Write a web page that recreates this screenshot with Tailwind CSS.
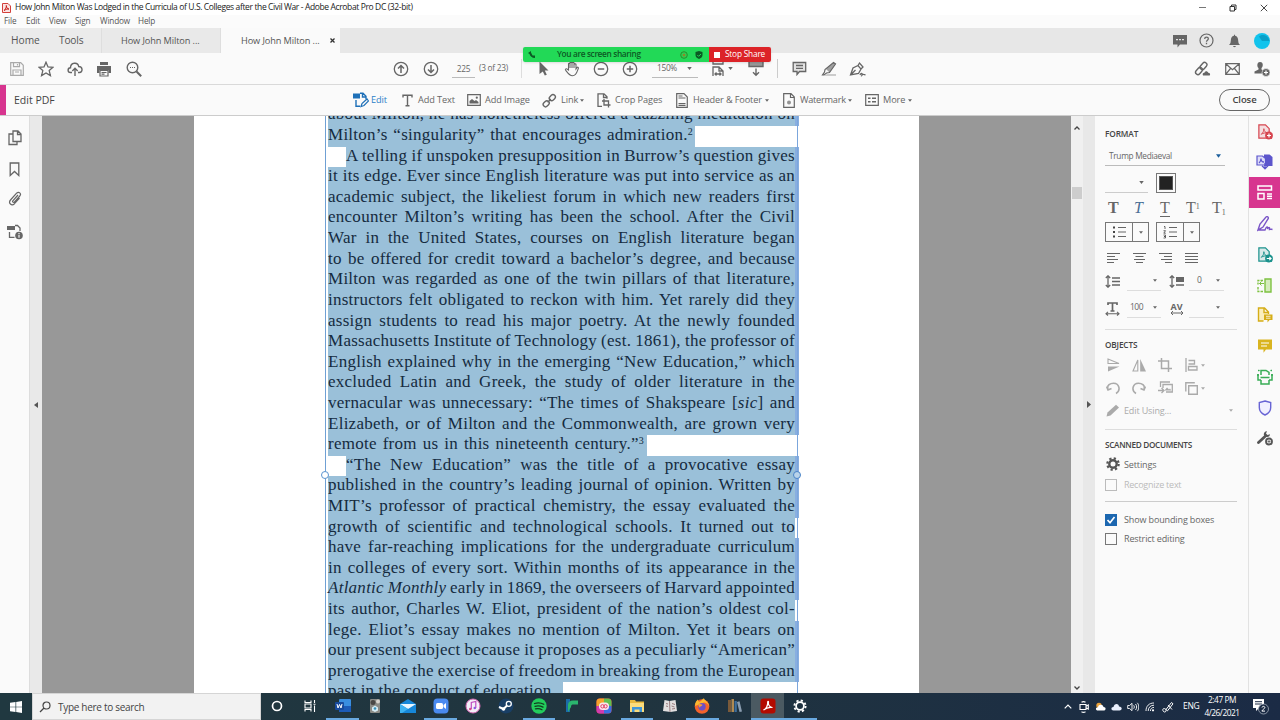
<!DOCTYPE html>
<html lang="en">
<head>
    <meta charset="UTF-8">
    <title>How John Milton Was Lodged in the Curricula of U.S. Colleges after the Civil War - Adobe Acrobat Pro DC (32-bit)</title>
    <script src="https://cdn.jsdelivr.net/npm/@tailwindcss/browser@4"></script>
</head>
<body class="w-[1280px] h-[720px] overflow-hidden bg-[#fafafa] font-['Open_Sans',sans-serif] text-[9px] leading-none text-[#555] whitespace-nowrap">

<!-- Shared symbols -->
<svg class="hidden">
    <symbol id="caret" viewBox="0 0 6 4"><path d="M0 0h6L3 4z" fill="currentColor"/></symbol>
    <symbol id="pdf" viewBox="0 0 16 16"><path d="M2 1h7l4 4v10H2z" fill="currentColor" fill-opacity=".15" stroke="currentColor" stroke-width="1.3"/><path d="M4.500 11c2-1.500 3-4 2.800-6 .3 3 1.500 4 3.700 4.300-2.500 0-4.500.5-6.500 1.700z" fill="none" stroke="currentColor"/></symbol>
    <symbol id="link" viewBox="0 0 16 16"><g fill="none" stroke="currentColor" stroke-width="1.5"><rect x="-3.500" y="-2.500" width="7" height="5" rx="2.500" transform="translate(4.500 11.500) rotate(-45)"/><rect x="-3.500" y="-2.500" width="7" height="5" rx="2.500" transform="translate(11 5) rotate(-45)"/><path d="M6 10l3.500-3.500"/></g></symbol>
</svg>

<div class="flex flex-col h-full">

    <!-- Title bar -->
    <div class="flex items-center h-[15px] bg-white text-[#222]">
        <svg class="w-[9px] h-[10px] ml-[2px]" viewBox="0 0 9 10"><path d="M.5.5h5.500l2.500 2.500v6.500h-8z" fill="#fbe3e2" stroke="#d2403c"/><path d="M2 7.500C4 6 4.500 4 4.300 2.500 4.500 5 5.500 6 7 6 5 6 3.500 6.500 2 7.500z" fill="none" stroke="#c9201c"/></svg>
        <span class="ml-[4px] text-[8.500px] tracking-[-0.380px]">How John Milton Was Lodged in the Curricula of U.S. Colleges after the Civil War - Adobe Acrobat Pro DC (32-bit)</span>
        <div class="flex items-center ml-auto pr-[12px] gap-[23px]">
            <svg class="w-[7px] h-[8px]" viewBox="0 0 7 8"><path d="M0 3.500h7" stroke="#777"/></svg>
            <svg class="w-[8px] h-[8px]" viewBox="0 0 8 8"><path d="M1 2.500h4.500v4.500H1zM2.500 2V1H7v4.500H6" fill="none" stroke="#333"/></svg>
            <svg class="w-[8px] h-[8px]" viewBox="0 0 8 8"><path d="M.8.8l6.400 6.400M7.200.8L.8 7.200" stroke="#333" stroke-width=".9"/></svg>
        </div>
    </div>

    <!-- Menu bar -->
    <div class="flex items-center h-[13px] pl-[4px] text-[8.200px] tracking-[-0.150px] bg-[#fbfbfb]">
        <span class="w-[22px]">File</span>
        <span class="w-[23px]">Edit</span>
        <span class="w-[26px]">View</span>
        <span class="w-[25px]">Sign</span>
        <span class="w-[38px]">Window</span>
        <span>Help</span>
    </div>

    <!-- Document tabs -->
    <div class="flex h-[25px] bg-[#e7e7e7] items-stretch">
        <div class="flex items-center w-[101px] text-[10.200px] pl-[11px] bg-[#ebebeb]"><span class="w-[48px]">Home</span><span class="tracking-[-0.200px]">Tools</span></div>
        <div class="flex items-center w-[120px] pl-[19px] text-[9.200px] tracking-[-0.100px] border-x border-[#dedede] bg-[#e9e9e9]">How John Milton ...</div>
        <div class="flex items-center w-[119px] pl-[20px] text-[9.200px] tracking-[-0.100px] bg-[#fafafa]"><span class="w-[89px]">How John Milton ...</span>
            <svg class="w-[5px] h-[5px]" viewBox="0 0 5 5"><path d="M.5.5l4 4M4.500.5l-4 4" stroke="#333" stroke-width="1.300"/></svg>
        </div>
        <div class="flex items-center ml-auto pr-[10px] text-[#666]">
            <svg class="w-[14px] h-[14px]" viewBox="0 0 14 14"><path d="M0 1h14v9.500H7l-2.500 3v-3H0z" fill="currentColor"/><path d="M3.200 5.700h1.600M6.200 5.700h1.600M9.200 5.700h1.600" stroke="#fff" stroke-width="1.300"/></svg>
            <svg class="w-[15px] h-[15px] ml-[12px]" viewBox="0 0 15 15"><circle cx="7.500" cy="7.500" r="6.500" fill="none" stroke="currentColor" stroke-width="1.200"/><path d="M5.700 6c0-2.500 3.700-2.300 3.600-.2 0 1.400-1.800 1.400-1.800 2.900M7.500 9.800v1.500" fill="none" stroke="currentColor" stroke-width="1.300"/></svg>
            <svg class="w-[13px] h-[14px] ml-[14px]" viewBox="0 0 13 14"><path d="M1 11c2-1.500 1.500-3 2-6 .3-2 1.500-3 3-3.200V.8h1v1c1.500.2 2.700 1.200 3 3.200.5 3 0 4.500 2 6zM5 12h3c-.3 1.500-2.700 1.500-3 0z" fill="currentColor"/></svg>
            <svg class="w-[16px] h-[16px] ml-[13px]" viewBox="0 0 16 16"><circle cx="8" cy="8" r="8" fill="#12c3ec"/><path d="M8 8L5 3.500C7 1 14 1 15.500 8z" fill="#0aa0c8"/></svg>
        </div>
    </div>

    <!-- Main toolbar -->
    <div class="flex items-center h-[32px] border-b border-[#d9d9d9] text-[#666] relative">
        <svg class="w-[14px] h-[14px] ml-[10px] text-[#aaa]" viewBox="0 0 14 14"><path d="M.7.7h10l2.600 2.600v10H.7zM3.500.7v4h6v-4M3 13.300V8h8v5.300M5 10h4M7.500 2v1.500" fill="none" stroke="currentColor" stroke-width="1.200"/></svg>
        <svg class="w-[16px] h-[16px] ml-[14px]" viewBox="0 0 16 16"><path d="M8 1.200l2 4.700 5 .4-3.800 3.300 1.200 5L8 11.900l-4.400 2.700 1.200-5L1 6.300l5-.4z" fill="none" stroke="currentColor" stroke-width="1.300"/></svg>
        <svg class="w-[16px] h-[16px] ml-[13px]" viewBox="0 0 16 16"><path d="M5 11.500H3.500C.3 11.300.3 7 3.500 6.800 3.500 1 11 .8 11.700 5.500 16 5.500 16 11.300 12.500 11.500H11M8 15V7.500M5.300 10L8 7.300l2.700 2.700" fill="none" stroke="currentColor" stroke-width="1.400"/></svg>
        <svg class="w-[16px] h-[16px] ml-[13px]" viewBox="0 0 16 16"><path d="M4 1h8v3H4zM1 5h14v7h-2.500V9h-9v3H1z" fill="currentColor"/><path d="M4 9.500h8V15H4zM5.500 11.500h5M5.500 13.200h3" fill="none" stroke="currentColor" stroke-width="1.200"/></svg>
        <svg class="w-[16px] h-[16px] ml-[14px]" viewBox="0 0 16 16"><circle cx="6.500" cy="6.500" r="5.300" fill="none" stroke="currentColor" stroke-width="1.400"/><path d="M10.500 10.500l4.700 4.700" stroke="currentColor" stroke-width="2"/><path d="M4 6.500h1M6 6.500h1M8 6.500h1" stroke="currentColor" stroke-width="1.200"/></svg>

        <svg class="w-[16px] h-[16px] ml-[251px]" viewBox="0 0 16 16"><circle cx="8" cy="8" r="6.700" fill="none" stroke="currentColor" stroke-width="1.300"/><path d="M8 12V4.500M5 7.500l3-3 3 3" fill="none" stroke="currentColor" stroke-width="1.500"/></svg>
        <svg class="w-[16px] h-[16px] ml-[14px]" viewBox="0 0 16 16"><circle cx="8" cy="8" r="6.700" fill="none" stroke="currentColor" stroke-width="1.300"/><path d="M8 4v7.500M5 8.500l3 3 3-3" fill="none" stroke="currentColor" stroke-width="1.500"/></svg>
        <span class="w-[23px] h-[18px] pt-[5px] ml-[13px] text-center text-[8.300px] tracking-[-0.200px] border-b border-[#bbb]">225</span>
        <span class="ml-[4px] w-[30px] text-[8.300px] tracking-[-0.250px]">(3 of 23)</span>
        <span class="w-px h-[19px] ml-[12px] bg-[#ddd]"></span>
        <svg class="w-[10px] h-[15px] ml-[17px]" viewBox="0 0 10 15"><path d="M.5.5l9 9H5.800l2 4.200-2 .9-2-4.200L.5 13z" fill="currentColor"/></svg>
        <svg class="w-[16px] h-[16px] ml-[15px]" viewBox="0 0 16 16"><path d="M4.500 9V3c0-1 1.500-1 1.500 0v4V2c0-1 2-1 2 0v5V2c0-1 2-1 2 0v5V3.500c0-1 2-1 2 0V8l1-1.500c1-.8 1.700 0 1.300 1-1 2.500-1.800 7.300-5.800 7.300C5.500 14.800 4.500 13 1.500 9c-.5-1 .8-1.700 1.500-1z" fill="none" stroke="currentColor" stroke-width="1.100"/></svg>
        <svg class="w-[16px] h-[16px] ml-[13px]" viewBox="0 0 16 16"><circle cx="8" cy="8" r="6.700" fill="none" stroke="currentColor" stroke-width="1.300"/><path d="M4.800 8h6.400" stroke="currentColor" stroke-width="1.500"/></svg>
        <svg class="w-[16px] h-[16px] ml-[13px]" viewBox="0 0 16 16"><circle cx="8" cy="8" r="6.700" fill="none" stroke="currentColor" stroke-width="1.300"/><path d="M4.800 8h6.400M8 4.800v6.400" stroke="currentColor" stroke-width="1.500"/></svg>
        <span class="flex items-center w-[46px] h-[18px] ml-[14px] pl-[5px] text-[8.300px] border-b border-[#bbb]"><span class="w-[30px] tracking-[-0.300px]">150%</span><svg class="w-[5px] h-[3px]"><use href="#caret"/></svg></span>
        <svg class="w-[13px] h-[16px] ml-[14px]" viewBox="0 0 13 16"><path d="M1 0v3h10V0M1 15V6h6l4 4v5M7 6v4h4M3 13h6M4.500 11.500L3 13l1.500 1.500M7.500 11.500L9 13l-1.500 1.500" fill="none" stroke="currentColor" stroke-width="1.300"/></svg>
        <svg class="w-[5px] h-[3px] ml-[3px]"><use href="#caret"/></svg>
        <svg class="w-[16px] h-[16px] ml-[15px]" viewBox="0 0 16 16"><path d="M1 1v4h14V1z" fill="#999"/><path d="M1 1v4.500h14V1M8 7.500v6.500M5 11.300l3 3 3-3" fill="none" stroke="currentColor" stroke-width="1.400"/></svg>
        <span class="w-px h-[19px] ml-[13px] bg-[#ccc]"></span>
        <svg class="w-[15px] h-[15px] ml-[14px]" viewBox="0 0 15 15"><path d="M1.200 1.500h12.500v9H7.500l-2.500 3v-3H1.200zM4 4.500h7M4 7.300h7" fill="#e2e2e2" stroke="currentColor" stroke-width="1.300"/></svg>
        <svg class="w-[16px] h-[16px] ml-[14px]" viewBox="0 0 16 16"><path d="M6 13h9v2H3z" fill="#ccc"/><path d="M12.500 1.500l2 1.500-6 8.500-3 .5-2.500 2H1.500l2-3 .5-2.500z" fill="none" stroke="currentColor" stroke-width="1.200"/><path d="M12.500 1.500l2 1.500-6 8.500L5 8z" fill="currentColor" fill-opacity=".6"/></svg>
        <svg class="w-[17px] h-[16px] ml-[12px]" viewBox="0 0 17 16"><path d="M1.500 14L4 7l5-2.500L12 8l-2.500 4.500zM9 4.500L10.500 2 14 6l-2 2M1.500 14l5-5M11 14c1-2.500 2.500-2 2 0 1.500-1.500 1.500 0 3.500-.3" fill="none" stroke="currentColor" stroke-width="1.300"/></svg>

        <svg class="w-[17px] h-[16px] ml-auto" viewBox="0 0 17 16"><g fill="none" stroke="currentColor" stroke-width="1.400"><rect x="-4" y="-2.300" width="8" height="4.600" rx="2.300" transform="translate(5 10) rotate(-50)"/><rect x="-4" y="-2.300" width="8" height="4.600" rx="2.300" transform="translate(9.500 5) rotate(-50)"/></g><path d="M9 14.500c-1-2 .5-3 1.500-2.700.5-2 3-2 3.700 0 1.800 0 2.500 1.700 1.500 2.700z" fill="currentColor"/></svg>
        <svg class="w-[15px] h-[12px] ml-[14px]" viewBox="0 0 15 12"><path d="M.7.7h13.600v10.600H.7zM.7.7l6.800 6 6.800-6M.7 11.300L5.500 5.500M14.300 11.300L9.500 5.500" fill="none" stroke="currentColor" stroke-width="1.200"/></svg>
        <svg class="w-[16px] h-[16px] ml-[14px] mr-[10px]" viewBox="0 0 16 16"><path d="M6 1c4 0 3 5 1.500 6v1.500L10 10v2.500H.5V10.500L4.500 8.500V7C3 6 2.500 1 6 1z" fill="currentColor"/><circle cx="12" cy="11.500" r="4" fill="currentColor" stroke="#fafafa" stroke-width=".6"/><path d="M10 11.500h4M12 9.500v4" stroke="#fff" stroke-width="1.200"/></svg>

        <!-- Screen share banner -->
        <div class="absolute left-[523px] top-[-6px] flex h-[15px] rounded-[2px] overflow-hidden shadow text-[8.300px]">
            <div class="flex items-center w-[186px] bg-[#22d957] text-[#0c5a24] font-semibold">
                <svg class="w-[7px] h-[7px] ml-[5px]" viewBox="0 0 7 7"><path d="M0 2l3-2v1.500l1.500 3H7V7C4 7 2 5 1.500 3z" fill="currentColor"/></svg>
                <span class="ml-[22px] w-[84px] tracking-[-0.350px]">You are screen sharing</span>
                <svg class="w-[8px] h-[8px] ml-[39px]" viewBox="0 0 8 8"><circle cx="4" cy="4" r="3.300" fill="none" stroke="#2f8a2a"/><circle cx="4" cy="4" r="1.500" fill="#8b8a2a"/></svg>
                <svg class="w-[8px] h-[8px] ml-[7px]" viewBox="0 0 8 8"><path d="M4 0l3.500 1v3c0 2-1.500 3.300-3.500 4C2 7.300.5 6 .5 4V1z" fill="currentColor"/><path d="M2.300 4l1.300 1.300L6 3" fill="none" stroke="#22d957"/></svg>
            </div>
            <div class="flex items-center w-[62px] bg-[#dc2328] text-white tracking-[-0.200px]"><span class="w-[6px] h-[6px] ml-[5px] mr-[5px] bg-white"></span>Stop Share</div>
        </div>
    </div>

    <!-- Edit PDF bar -->
    <div class="flex items-center h-[31px] border-b border-[#ccc] text-[9.200px] tracking-[-0.100px] text-[#666]">
        <span class="w-[6px] h-full bg-[#d7358f]"></span>
        <span class="ml-[8px] w-[339px] text-[10.500px] tracking-normal text-[#444]">Edit PDF</span>
        <svg class="w-[16px] h-[16px] text-[#1f70b8]" viewBox="0 0 16 16"><path d="M0 1.500h7v5H0z" fill="currentColor"/><path d="M7 1.200h3l3 3v3M9.500 1.200V5H13M3 8v6.300h4" fill="none" stroke="currentColor" stroke-width="1.400"/><path d="M8 14.500l1-3 5-4.500 1.500 2-4.500 4.500z" fill="none" stroke="currentColor" stroke-width="1.200"/></svg>
        <span class="ml-[2px] w-[31px] text-[#2c80c8]">Edit</span>
        <svg class="w-[11px] h-[13px]" viewBox="0 0 11 13"><path d="M1 3.500V1.200h9v2.300M5.500 1.200v10.600M3.500 11.800h4" fill="none" stroke="currentColor" stroke-width="1.400"/></svg>
        <span class="ml-[5px] w-[49px]">Add Text</span>
        <svg class="w-[14px] h-[12px]" viewBox="0 0 14 12"><path d="M.7.7h12.600v10.600H.7z" fill="none" stroke="currentColor" stroke-width="1.200"/><path d="M2.500 9.500V7l2.500-2 2.500 2 1.500-1 2.500 2v1.500z" fill="currentColor"/><circle cx="9.800" cy="3.700" r="1.100" fill="currentColor"/></svg>
        <span class="ml-[4px] w-[57px]">Add Image</span>
        <svg class="w-[15px] h-[15px]"><use href="#link"/></svg>
        <span class="ml-[4px] w-[19px]">Link</span><svg class="w-[4px] h-[3px]"><use href="#caret"/></svg>
        <svg class="w-[14px] h-[15px] ml-[13px]" viewBox="0 0 14 15"><path d="M5 13.300H1V.8h6l3 3v2M6.500.8V4.500H10M7 6v6h6.500M5 8h6.500v6.500" fill="none" stroke="currentColor" stroke-width="1.300"/></svg>
        <span class="ml-[4px] w-[61px]">Crop Pages</span>
        <svg class="w-[12px] h-[15px]" viewBox="0 0 12 15"><path d="M.7.7h7.300l3.300 3.300v10.300H.7z" fill="none" stroke="currentColor" stroke-width="1.200"/><path d="M2.500 3h4M2.500 5h7M2.500 10.500h7M2.500 12.300h7" stroke="currentColor" stroke-width="1.200"/></svg>
        <span class="ml-[5px] w-[72px] tracking-[-0.150px]">Header &amp; Footer</span><svg class="w-[4px] h-[3px]"><use href="#caret"/></svg>
        <svg class="w-[12px] h-[15px] ml-[14px]" viewBox="0 0 12 15"><path d="M.7.7h7.300l3.300 3.300v10.300H.7zM7.500.7v3.800h3.800" fill="none" stroke="currentColor" stroke-width="1.200"/><circle cx="6" cy="9.500" r="2" fill="currentColor" fill-opacity=".7"/></svg>
        <span class="ml-[5px] w-[48px] tracking-[-0.250px]">Watermark</span><svg class="w-[4px] h-[3px]"><use href="#caret"/></svg>
        <svg class="w-[14px] h-[12px] ml-[13px]" viewBox="0 0 14 12"><path d="M.7.7h12.600v10.600H.7z" fill="none" stroke="currentColor" stroke-width="1.200"/><path d="M3 4.200h2.500M3 7.700h2.500M7 4.200h4M7 7.700h4" stroke="currentColor" stroke-width="1.500"/></svg>
        <span class="ml-[4px] w-[25px]">More</span><svg class="w-[4px] h-[3px]"><use href="#caret"/></svg>
        <span class="flex items-center justify-center w-[51px] h-[22px] ml-auto mr-[10px] border border-[#666] rounded-full text-[9.500px] font-semibold text-[#444]">Close</span>
    </div>

    <!-- Workspace -->
    <div class="flex h-[577px]">
        <!-- Left navigation rail -->
        <div class="flex flex-col items-center w-[30px] pt-[14px] text-[#666] border-r border-[#ddd]">
            <svg class="w-[14px] h-[16px]" viewBox="0 0 14 16"><path d="M5 1h5l3 3v7.500H5zM9.500 1v3.500H13M4.500 4H1v10.500h8v-3" fill="none" stroke="currentColor" stroke-width="1.300"/></svg>
            <svg class="w-[11px] h-[15px] mt-[16px]" viewBox="0 0 11 15"><path d="M1.200 1h8.600v12.500l-4.300-4-4.300 4z" fill="none" stroke="currentColor" stroke-width="1.300"/></svg>
            <svg class="w-[14px] h-[16px] mt-[14px]" viewBox="0 0 14 16"><path d="M10 4L4.800 9.800c-.8 1 .6 2.200 1.500 1.300L11.800 5c2-2.500-1-5-3.200-2.800L2.500 9c-2.500 3 1 6.500 4 3.700L11.500 7" fill="none" stroke="currentColor" stroke-width="1.200"/></svg>
            <svg class="w-[16px] h-[16px] mt-[17px]" viewBox="0 0 16 16"><path d="M0 2h8v4H0z" fill="currentColor"/><path d="M8 1.500h2.500L13 4v3M2.500 8v5.300h5" fill="none" stroke="currentColor" stroke-width="1.300"/><circle cx="12" cy="11.500" r="3.800" fill="currentColor"/><path d="M12 10.800v3M12 9v1" stroke="#fff" stroke-width="1.100"/></svg>
        </div>
        <div class="flex items-center justify-center w-[12px] bg-[#e9e9e9]"><svg class="w-[4px] h-[6px]" viewBox="0 0 4 6"><path d="M4 0v6L0 3z" fill="#555"/></svg></div>

        <!-- Page canvas -->
        <div class="flex justify-center w-[1029px] h-full bg-[#989898] overflow-hidden">
            <div class="relative w-[725px] h-full bg-white pl-[131px] overflow-hidden">
                <div class="flow-root w-[474px] h-full border-l border-[#6fa0d4] pl-[2px]">
                    <div class="-mt-[10.600px] text-[17px] leading-[18px] tracking-[0.260px] [word-spacing:-0.800px] font-['Liberation_Serif',serif] text-[#152b40] [&>p]:h-[20.620px] [&>p]:w-[471px] [&>p]:bg-[#9ac0d9] [&>p]:border-r-[4px] [&>p]:border-[#88aee0] [&>p]:[text-align-last:justify]">
                        <p>about Milton, he has nonetheless offered a dazzling meditation on</p>
                        <p class="w-[367px]! border-r-0! pr-[2px]">Milton’s “singularity” that encourages admiration.<span class="text-[10px] align-[5px] leading-none">2</span></p>
                        <p class="w-[453px]! ml-[18px]">A telling if unspoken presupposition in Burrow’s question gives</p>
                        <p>it its edge. Ever since English literature was put into service as an</p>
                        <p>academic subject, the likeliest forum in which new readers first</p>
                        <p>encounter Milton’s writing has been the school. After the Civil</p>
                        <p>War in the United States, courses on English literature began</p>
                        <p>to be offered for credit toward a bachelor’s degree, and because</p>
                        <p>Milton was regarded as one of the twin pillars of that literature,</p>
                        <p>instructors felt obligated to reckon with him. Yet rarely did they</p>
                        <p>assign students to read his major poetry. At the newly founded</p>
                        <p>Massachusetts Institute of Technology (est. 1861), the professor of</p>
                        <p>English explained why in the emerging “New Education,” which</p>
                        <p>excluded Latin and Greek, the study of older literature in the</p>
                        <p>vernacular was unnecessary: “The times of Shakspeare [<i>sic</i>] and</p>
                        <p>Elizabeth, or of Milton and the Commonwealth, are grown very</p>
                        <p class="w-[319px]! border-r-0! pr-[3px]">remote from us in this nineteenth century.”<span class="text-[10px] align-[5px] leading-none">3</span></p>
                        <p class="w-[453px]! ml-[18px]">“The New Education” was the title of a provocative essay</p>
                        <p>published in the country’s leading journal of opinion. Written by</p>
                        <p>MIT’s professor of practical chemistry, the essay evaluated the</p>
                        <p class="w-[467px]! border-r-0!">growth of scientific and technological schools. It turned out to</p>
                        <p>have far-reaching implications for the undergraduate curriculum</p>
                        <p>in colleges of every sort. Within months of its appearance in the</p>
                        <p><i>Atlantic Monthly</i> early in 1869, the overseers of Harvard appointed</p>
                        <p class="w-[467px]! border-r-0!">its author, Charles W. Eliot, president of the nation’s oldest col-</p>
                        <p>lege. Eliot’s essay makes no mention of Milton. Yet it bears on</p>
                        <p>our present subject because it proposes as a peculiarly “American”</p>
                        <p>prerogative the exercise of freedom in breaking from the European</p>
                        <p class="w-[235px]! border-r-0! pr-[7px]">past in the conduct of education.</p>
                    </div>
                </div>
                <!-- Selection frame -->
                <span class="absolute left-[603px] top-0 w-px h-full bg-[#7ba6dc]"></span>
                <span class="absolute left-[127px] top-[355px] w-[8px] h-[8px] rounded-full bg-white border border-[#5a94d0]"></span>
                <span class="absolute left-[599px] top-[355px] w-[8px] h-[8px] rounded-full bg-[#b9d3ea] border border-[#4a84c8]"></span>
            </div>
        </div>

        <!-- Scrollbar -->
        <div class="flex flex-col items-center w-[12px] bg-[#f0f0f0] text-[#444]">
            <svg class="w-[6px] h-[4px] mt-[10px]" viewBox="0 0 6 4"><path d="M.5 3.500L3 1l2.500 2.500" fill="none" stroke="currentColor" stroke-width="1.300"/></svg>
            <span class="w-[10px] h-[12px] mt-[57px] bg-[#cdcdcd]"></span>
            <svg class="w-[6px] h-[4px] mt-auto mb-[3px]" viewBox="0 0 6 4"><path d="M.5.5L3 3 5.500.5" fill="none" stroke="currentColor" stroke-width="1.300"/></svg>
        </div>
        <div class="flex items-center justify-center w-[12px] bg-[#e8e8e8]"><svg class="w-[4px] h-[7px]" viewBox="0 0 4 7"><path d="M0 0v7l4-3.500z" fill="#555"/></svg></div>

        <!-- Format panel -->
        <div class="w-[154px] pl-[10px] pt-[8px] border-r border-[#e2e2e2] text-[#666] text-[9px] tracking-[-0.130px]">
            <div class="flex items-center h-[20px] text-[8.300px] font-semibold text-[#444]">FORMAT</div>
            <div class="flex items-center w-[120px] h-[19px] mt-[3px] pl-[4px] border-b border-[#bbb] text-[8.300px] tracking-[-0.300px]">Trump Mediaeval<svg class="w-[5px] h-[4px] ml-auto mr-[4px] text-[#1c5f9c]"><use href="#caret"/></svg></div>
            <div class="flex items-center h-[20px] mt-[7px]">
                <span class="flex items-center justify-end w-[43px] h-[20px] pr-[4px] border-b border-[#ccc]"><svg class="w-[5px] h-[3px]"><use href="#caret"/></svg></span>
                <span class="w-[20px] h-[20px] ml-[8px] p-[2px] border border-[#777]"><span class="block size-full bg-[#222] border border-[#555]"></span></span>
            </div>
            <div class="flex items-center h-[20px] mt-[5px] font-['Liberation_Serif',serif] text-[16px]">
                <span class="w-[27px] pl-[3px] font-bold">T</span>
                <span class="w-[25px] pl-[2px] italic text-[#4a6f96]">T</span>
                <span class="w-[26px] pl-[3px]"><span class="border-b border-[#666]">T</span></span>
                <span class="w-[26px] pl-[3px]">T<sup class="text-[8px]">1</sup></span>
                <span class="pl-[3px]">T<sub class="text-[8px]">1</sub></span>
            </div>
            <div class="flex h-[20px] mt-[4px]">
                <div class="flex items-center w-[44px] border border-[#777]">
                    <svg class="w-[26px] h-[12px]" viewBox="0 0 26 12"><path d="M12 1.500h8M12 6h8M12 10.500h8" stroke="currentColor" stroke-width="1.100"/><path d="M7 1.500h2M7 6h2M7 10.500h2" stroke="#444" stroke-width="2"/></svg>
                    <span class="flex items-center justify-center w-[16px] h-full border-l border-[#777]"><svg class="w-[4px] h-[3px]"><use href="#caret"/></svg></span>
                </div>
                <div class="flex items-center w-[44px] ml-[7px] border border-[#777]">
                    <svg class="w-[26px] h-[14px]" viewBox="0 0 26 14"><path d="M12 2.500h8M12 7h8M12 11.500h8" stroke="currentColor" stroke-width="1.100"/><path d="M7 1.500h1v2.500M6.500 5.700h2l-1.700 2.500h2M6.500 10h2v1.500H7h1.500V13h-2" fill="none" stroke="#444" stroke-width=".8"/></svg>
                    <span class="flex items-center justify-center w-[16px] h-full border-l border-[#777]"><svg class="w-[4px] h-[3px]"><use href="#caret"/></svg></span>
                </div>
            </div>
            <div class="flex items-center h-[20px] mt-[5px] pl-[2px] gap-[13px]">
                <svg class="w-[13px] h-[11px]" viewBox="0 0 13 11"><path d="M0 1.500h13M0 4.500h8M0 7.500h11M0 10.500h7" stroke="currentColor"/></svg>
                <svg class="w-[13px] h-[11px]" viewBox="0 0 13 11"><path d="M0 1.500h13M2.500 4.500h8M1 7.500h11M3 10.500h7" stroke="currentColor"/></svg>
                <svg class="w-[13px] h-[11px]" viewBox="0 0 13 11"><path d="M0 1.500h13M5 4.500h8M2 7.500h11M6 10.500h7" stroke="currentColor"/></svg>
                <svg class="w-[13px] h-[11px]" viewBox="0 0 13 11"><path d="M0 1.500h13M0 4.500h13M0 7.500h13M0 10.500h13" stroke="currentColor"/></svg>
            </div>
            <div class="flex items-center h-[20px] mt-[4px] text-[8.500px]">
                <svg class="w-[15px] h-[13px]" viewBox="0 0 15 13"><path d="M3 1v11M.8 3L3 .8 5.200 3M.8 10L3 12.200 5.200 10M7 3h8M7 6.500h8M7 10h8" fill="none" stroke="currentColor" stroke-width="1.300"/></svg>
                <span class="flex items-center justify-end w-[34px] h-[20px] ml-[7px] pr-[4px] border-b border-[#ddd]"><svg class="w-[4px] h-[3px]"><use href="#caret"/></svg></span>
                <svg class="w-[15px] h-[13px] ml-[8px]" viewBox="0 0 15 13"><path d="M3 1v11M.8 3L3 .8 5.200 3M.8 10L3 12.200 5.200 10M7 10h8" fill="none" stroke="currentColor" stroke-width="1.300"/><path d="M7 2h8v5H7z" fill="currentColor"/></svg>
                <span class="flex items-center justify-between w-[35px] h-[20px] ml-[5px] pl-[8px] pr-[4px] border-b border-[#ddd]">0<svg class="w-[4px] h-[3px]"><use href="#caret"/></svg></span>
            </div>
            <div class="flex items-center h-[20px] mt-[7px] text-[8.500px]">
                <svg class="w-[15px] h-[15px]" viewBox="0 0 15 15"><path d="M3 4V2h9v2M7.500 2v8M5.500 10h4" fill="none" stroke="currentColor" stroke-width="1.700"/><path d="M1 12.700h13M3 10.900l-2 1.800 2 1.800M12 10.900l2 1.800-2 1.800" fill="none" stroke="currentColor" stroke-width="1.100"/></svg>
                <span class="flex items-center justify-between w-[34px] h-[20px] ml-[7px] pl-[3px] pr-[4px] border-b border-[#ddd] tracking-[-0.500px]">100<svg class="w-[4px] h-[3px]"><use href="#caret"/></svg></span>
                <span class="flex flex-col items-center w-[15px] ml-[8px] text-[9px] font-bold">AV<svg class="w-[14px] h-[4px]" viewBox="0 0 14 4"><path d="M1 2h12M3 0L1 2l2 2M11 0l2 2-2 2" fill="none" stroke="currentColor"/></svg></span>
                <span class="flex items-center justify-end w-[35px] h-[20px] ml-[5px] pr-[4px] border-b border-[#ddd]"><svg class="w-[4px] h-[3px]"><use href="#caret"/></svg></span>
            </div>
            <div class="w-[132px] h-px mt-[11px] bg-[#ddd]"></div>

            <div class="flex items-center h-[20px] mt-[5px] text-[8.200px] font-semibold text-[#444]">OBJECTS</div>
            <div class="flex items-center h-[20px] pl-[2px] text-[#aaa]">
                <svg class="w-[13px] h-[14px]" viewBox="0 0 13 14"><path d="M1 1l11 4.500H1z" fill="none" stroke="currentColor" stroke-width="1.100"/><path d="M1 8.500h11.500L1 13.500z" fill="currentColor"/></svg>
                <svg class="w-[14px] h-[13px] ml-[12px]" viewBox="0 0 14 13"><path d="M5.800 1v11H1z" fill="none" stroke="currentColor" stroke-width="1.100"/><path d="M8.200 0v12.500H14z" fill="currentColor"/></svg>
                <svg class="w-[14px] h-[14px] ml-[12px]" viewBox="0 0 14 14"><path d="M3.500 0v10.500H14M0 3h10.500v11" fill="none" stroke="currentColor" stroke-width="1.500"/></svg>
                <svg class="w-[13px] h-[14px] ml-[13px]" viewBox="0 0 13 14"><path d="M1 0v14M3.500 2.500h6v3.500h-6M3.500 8.500H12V12H3.500z" fill="none" stroke="currentColor" stroke-width="1.300"/></svg>
                <svg class="w-[4px] h-[3px] ml-[3px]"><use href="#caret"/></svg>
            </div>
            <div class="flex items-center h-[20px] mt-[3px] pl-[1px] text-[#aaa]">
                <svg class="w-[14px] h-[13px]" viewBox="0 0 14 13"><path d="M2 7.500C.5 3 4.500 1.200 7.500 1.200c6 0 7.500 7.500 2.500 10.300M.5 4.500l1.500 3.500 3.500-1.500" fill="none" stroke="currentColor" stroke-width="1.600"/></svg>
                <svg class="w-[14px] h-[13px] ml-[12px]" viewBox="0 0 14 13"><path d="M12 7.500c1.500-4.500-2.500-6.300-5.500-6.300-6 0-7.500 7.500-2.500 10.300M13.500 4.500L12 8 8.500 6.500" fill="none" stroke="currentColor" stroke-width="1.600"/></svg>
                <svg class="w-[15px] h-[14px] ml-[12px]" viewBox="0 0 15 14"><path d="M2.500 6V1H12M5 7V3.500h9.300V11H8M0 9.500h6M3.500 7L6 9.500 3.500 12" fill="none" stroke="currentColor" stroke-width="1.300"/><path d="M6.500 9.500l2.500-3 2 2 1-1 1.300 2z" fill="currentColor"/></svg>
                <svg class="w-[13px] h-[13px] ml-[12px]" viewBox="0 0 13 13"><path d="M3.700 3.700h8.600v8.600H3.700zM.8 9.500V.8h9" fill="none" stroke="currentColor" stroke-width="1.400"/></svg>
                <svg class="w-[4px] h-[3px] ml-[3px]"><use href="#caret"/></svg>
            </div>
            <div class="flex items-center w-[132px] h-[20px] mt-[2px] pl-[1px] text-[#aaa]">
                <svg class="w-[14px] h-[13px]" viewBox="0 0 14 13"><path d="M.5 12.500l1-4L10 .8l3 2.700-8.500 8z" fill="currentColor"/></svg>
                <span class="ml-[4px]">Edit Using...</span><svg class="w-[4px] h-[3px] ml-auto mr-[4px]"><use href="#caret"/></svg>
            </div>
            <div class="w-[132px] h-px mt-[9px] bg-[#ddd]"></div>

            <div class="flex items-center h-[20px] mt-[5px] text-[8.200px] tracking-[-0.300px] font-semibold text-[#444]">SCANNED DOCUMENTS</div>
            <div class="flex items-center h-[18px] pl-[1px]">
                <svg class="w-[14px] h-[14px]" viewBox="0 0 14 14"><circle cx="7" cy="7" r="3.700" fill="none" stroke="#555" stroke-width="2.400"/><circle cx="7" cy="7" r="5.700" fill="none" stroke="#555" stroke-width="2.200" stroke-dasharray="2.240 2.240"/></svg>
                <span class="ml-[4px]">Settings</span>
            </div>
            <div class="flex items-center h-[19px] mt-[2px] tracking-[-0.250px] text-[#bbb]"><span class="w-[12px] h-[12px] mr-[7px] border border-[#bbb]"></span>Recognize text</div>
            <div class="w-[132px] h-px mt-[7px] bg-[#ccc]"></div>
            <div class="flex items-center h-[19px] mt-[8px]">
                <svg class="w-[12px] h-[12px] mr-[7px]" viewBox="0 0 12 12"><path d="M0 0h12v12H0z" fill="#1c67b0"/><path d="M2.500 6l2.500 2.700L9.500 3" fill="none" stroke="#fff" stroke-width="1.700"/></svg>Show bounding boxes
            </div>
            <div class="flex items-center h-[19px]"><span class="w-[12px] h-[12px] mr-[7px] border border-[#777]"></span>Restrict editing</div>
        </div>

        <!-- Tools rail -->
        <div class="flex flex-col items-center flex-1 h-full">
            <div class="flex items-center h-[31px] text-[#d6454f]"><svg class="w-[16px] h-[16px]" viewBox="0 0 16 16"><use href="#pdf" width="15" height="15"/><circle cx="12" cy="11.500" r="3.900" fill="currentColor"/><path d="M10 11.500h4M12 9.500v4" stroke="#fff" stroke-width="1.200"/></svg></div>
            <div class="flex items-center h-[30px] text-[#5c55cc]"><svg class="w-[17px] h-[16px]" viewBox="0 0 17 16"><path d="M8 .5h5.500L16.500 3v9H8z" fill="currentColor"/><path d="M1 2h5.500l3 2.500v6.500H1z" fill="#dddcf8" stroke="currentColor" stroke-width="1.200"/><path d="M3 9c2-1.500 2-3 2-4.500C5 7 6 8 8 8M9 9v5.500M6 11.800l3 3 3-3" fill="none" stroke="currentColor" stroke-width="1.300"/></svg></div>
            <div class="flex items-center justify-center w-full h-[31px] bg-[#d7358f]"><svg class="w-[16px] h-[15px]" viewBox="0 0 16 15"><path d="M1 1h13.500v4H1zM1 8.500h6V14H1zM10 9h5M10 11.300h5M10 13.600h5" fill="none" stroke="#fff" stroke-width="1.500"/></svg></div>
            <div class="flex items-center h-[31px] text-[#7a55c7]"><svg class="w-[16px] h-[16px]" viewBox="0 0 16 16"><path d="M1 14l2-6 6-7c1.500-1 3 .5 2 2L6 11zM1 14h7c1.500-4 3-4 2.500-1 1.500-2.500 2.500-1.500 2 .5 1 0 1.500-.5 3 0" fill="none" stroke="currentColor" stroke-width="1.400"/></svg></div>
            <div class="flex items-center h-[31px] text-[#1a918c]"><svg class="w-[16px] h-[16px]" viewBox="0 0 16 16"><use href="#pdf" width="15" height="15"/><circle cx="12" cy="11.500" r="3.900" fill="currentColor"/><path d="M9.800 11.500h4M12.300 9.800l1.800 1.700-1.800 1.700" fill="none" stroke="#fff" stroke-width="1.100"/></svg></div>
            <div class="flex items-center h-[30px] text-[#7ec142]"><svg class="w-[15px] h-[15px]" viewBox="0 0 15 15"><path d="M8 1h6v13H8z" fill="#d5edbc" stroke="currentColor" stroke-width="1.400"/><path d="M6 2.500H1v4M6 13.500H1V8" fill="none" stroke="currentColor" stroke-width="1.400" stroke-dasharray="2.500 1"/><path d="M7 5.500H2.500M4.500 3.500l-2 2 2 2" fill="none" stroke="currentColor"/></svg></div>
            <div class="flex items-center h-[30px] text-[#d5ad17]"><svg class="w-[16px] h-[16px]" viewBox="0 0 16 16"><path d="M6.500 14H1.500V1h6l4 4v2M7 1v4.500h4.500" fill="#fbefbd" stroke="currentColor" stroke-width="1.400"/><path d="M7 7.500h8.500v5.500h-3l-2 2.500V13H7z" fill="currentColor"/><path d="M9 9.300h4.500M9 11.200h4.500" stroke="#fff" stroke-width=".8"/></svg></div>
            <div class="flex items-center h-[31px] text-[#d9b420]"><svg class="w-[14px] h-[14px]" viewBox="0 0 14 14"><path d="M0 .5h14v10H8L5.500 13.800v-3.300H0z" fill="currentColor"/><path d="M3 4h8M3 7h6" stroke="#fff" stroke-width="1.200"/></svg></div>
            <div class="flex items-center h-[31px] text-[#38ad55]"><svg class="w-[16px] h-[16px]" viewBox="0 0 16 16"><path d="M4 6V1.500h5l3 2V6M0 6h2M14 6h2M1 5v6h3M15 5v6h-3M3.500 8.500h9M4 11v4h8v-4" fill="none" stroke="currentColor" stroke-width="1.500"/><path d="M1 1.500h1.500M13.500 1.500H15M1.800.7v1.600M14.300.7v1.600" stroke="currentColor"/></svg></div>
            <div class="flex items-center h-[31px] text-[#6864d4]"><svg class="w-[14px] h-[16px]" viewBox="0 0 14 16"><path d="M7 1l5.700 1.500V7.500c0 3.800-2.200 6-5.700 7.500-3.500-1.500-5.700-3.700-5.700-7.500v-5z" fill="#f1f0ff" stroke="currentColor" stroke-width="1.400"/></svg></div>
            <div class="flex items-center h-[30px] text-[#555]"><svg class="w-[16px] h-[16px]" viewBox="0 0 16 16"><path d="M1.500 12.500L8 6.500" stroke="currentColor" stroke-width="2.800" stroke-linecap="round"/><path d="M12.500 2l-2 2.500M8 6.500C5.500 4.500 7.500.8 10 1.300L9 3.500l1.500 1.500 2.500-.7c0 2-2 3.700-5 2.200z" fill="currentColor"/><circle cx="12" cy="11.500" r="3" fill="#fafafa" stroke="currentColor" stroke-width="1.800"/><path d="M12 10v3M10.500 11.500h3" stroke="currentColor" stroke-width=".8"/></svg></div>
        </div>
    </div>

    <!-- Taskbar -->
    <div class="flex h-[27px] bg-linear-to-r from-[#203840] via-[#20343f] to-[#1b2b45] text-white">
        <div class="flex items-center w-[32px] pl-[10px]"><svg class="w-[12px] h-[12px]" viewBox="0 0 12 12"><path d="M0 1.700L5.500 1v4.700H0zM6.200.9L12 0v5.700H6.200zM0 6.300h5.500V11L0 10.300zM6.200 6.300H12V12l-5.800-.9z" fill="#fff"/></svg></div>
        <div class="flex items-center w-[229px] bg-[#f2f2f2] border border-[#d5d5d5] text-[10px] tracking-[-0.300px] text-[#444]">
            <svg class="w-[12px] h-[12px] ml-[6px] mr-[7px]" viewBox="0 0 12 12"><circle cx="7.500" cy="4.500" r="3.500" fill="none" stroke="#444" stroke-width="1.200"/><path d="M5 7L1 11" stroke="#444" stroke-width="1.200"/></svg>Type here to search
        </div>
        <div class="flex [&>div]:w-[32.700px] [&>div]:flex [&>div]:items-center [&>div]:justify-center [&>div]:border-b-2 [&_svg]:size-[16px]">
            <div class="border-transparent"><svg viewBox="0 0 16 16"><circle cx="8" cy="8" r="4.500" fill="none" stroke="#fff" stroke-width="1.700"/></svg></div>
            <div class="border-transparent"><svg viewBox="0 0 16 16"><path d="M3 2.500v2h6v-2M3 13.500v-2h6v2M3 6h6v4H3zM12.500 2v3M12.500 7.500v6.500M11.500 6.300h2" fill="none" stroke="#fff" stroke-width="1.100"/></svg></div>
            <div class="border-[#69a9e0]"><svg viewBox="0 0 16 16"><rect x="4" y="1" width="12" height="13" rx="1" fill="#3a8ee0"/><path d="M4 8h12v6H4z" fill="#1c5bb8"/><rect y="4" width="9" height="8" rx="1" fill="#184a9c"/><path d="M2 6l1 4 1.500-3.500L6 10l1-4" fill="none" stroke="#fff"/></svg></div>
            <div class="border-transparent"><svg viewBox="0 0 16 16"><rect x="3" y="1" width="10" height="14" rx="1" fill="#8b8b86"/><circle cx="6" cy="4.500" r="2.500" fill="#4a4745"/><circle cx="11" cy="3.500" r="2" fill="#d8d4ce"/><path d="M8 7.500l3 2v3l-3 1.500-3-1.500v-3z" fill="#d6edf5"/><circle cx="8" cy="10.500" r="1.300" fill="#3a91bb"/></svg></div>
            <div class="border-transparent"><svg viewBox="0 0 16 16"><path d="M0 6l8-5 8 5v9H0z" fill="#1687d9"/><path d="M0 6h16l-8 5z" fill="#e9f6ff"/><path d="M0 6l8 5-6 4H0z" fill="#3cb2f2"/></svg></div>
            <div class="border-[#69a9e0]"><svg viewBox="0 0 16 16"><rect x=".5" y=".5" width="15" height="15" rx="4" fill="#4a8af0"/><rect x="3" y="5" width="7" height="6" rx="1.500" fill="#fff"/><path d="M10.500 7L13 5v6l-2.500-2z" fill="#fff"/></svg></div>
            <div class="border-transparent"><svg viewBox="0 0 16 16"><circle cx="8" cy="8" r="7" fill="#f4eef8" stroke="#d668b4"/><path d="M6.300 11V4.500l4.500-1v6.500" fill="none" stroke="#c04cc0" stroke-width="1.200"/><circle cx="5.300" cy="11" r="1.300" fill="#d84a8a"/><circle cx="9.800" cy="10" r="1.300" fill="#8a5ae0"/></svg></div>
            <div class="border-transparent"><svg viewBox="0 0 16 16"><circle cx="8" cy="8" r="7.500" fill="#193f66"/><path d="M1 9l4.500 2 5-5" stroke="#fff" stroke-width="2" fill="none"/><circle cx="10.800" cy="5.800" r="2.500" fill="#193f66" stroke="#fff" stroke-width="1.300"/><circle cx="5.500" cy="11" r="1.800" fill="#fff"/></svg></div>
            <div class="border-[#69a9e0]"><svg viewBox="0 0 16 16"><circle cx="8" cy="8" r="7.700" fill="#23cc5c"/><path d="M3.500 5.500c3-1 6.500-.8 9.300.8M4 8.300c2.700-.8 5.500-.5 8 .8M4.500 10.900c2.200-.6 4.500-.4 6.500.8" fill="none" stroke="#12391f" stroke-width="1.300" stroke-linecap="round"/></svg></div>
            <div class="border-transparent"><svg viewBox="0 0 16 16"><path d="M2 1h4v13H2z" fill="#1b6ba8"/><path d="M4 14V7c0-3 2-4.500 5-4.500h5v4H9.500C8 6.500 7 7 7 9z" fill="#2bb56e"/></svg></div>
            <div class="border-transparent"><svg viewBox="0 0 16 16"><rect x=".5" y=".5" width="15" height="15" rx="3" fill="#e8433f"/><path d="M.5 4a3.500 3.500 0 013.500-3.500h4V8H.5z" fill="#f4a52c"/><path d="M8 .5h4A3.500 3.500 0 0115.500 4v4H8z" fill="#62c050"/><path d="M8 8h7.500v4a3.500 3.500 0 01-3.500 3.500H8z" fill="#3b6fe0"/><path d="M.5 8H8v7.500H4A3.500 3.500 0 01.5 12z" fill="#d23bb0"/><rect x="3" y="4.500" width="10" height="7.500" rx="3.500" fill="#fbe5ee"/><circle cx="6.500" cy="8.300" r="1.700" fill="none" stroke="#e33d63"/><circle cx="9.500" cy="8.300" r="1.700" fill="none" stroke="#e33d63"/></svg></div>
            <div class="border-[#69a9e0]"><svg viewBox="0 0 16 16"><path d="M1 2h5l1 1.500h8V14H1z" fill="#e8b83e"/><path d="M1 5h14v9H1z" fill="#fbdc7c"/><path d="M3 14V9h10v5h-2.500v-2.500h-5V14z" fill="#3f95d8"/></svg></div>
            <div class="border-transparent"><svg viewBox="0 0 16 16"><path d="M2.500 2l5 1 6-1 1.500 11-6.500 1L1 13z" fill="#e2dfdf"/><path d="M7.500 3l.5 11M4 5.500l2 .5M4 8l2 .5M10 5.500l3 1M9.500 8l3 1M10 11l3-.5" stroke="#9a7d80" fill="none"/></svg></div>
            <div class="border-[#69a9e0]"><svg viewBox="0 0 16 16"><circle cx="8" cy="8.500" r="7.300" fill="#f4622c"/><path d="M1 8c0-4 2-6 3-6.500 0 1.500.7 2 1.500 2.200C8 3 8 .8 10 .3c0 2 5 3.700 5 8.200-1-3-3-4-5-4z" fill="#fbb72f"/><circle cx="8" cy="8.800" r="3.700" fill="#6a4fc8"/><path d="M4 6.500c2-1 3 0 4.500.3-.5 1.700-2.500 1-3 3z" fill="#fa9c30"/></svg></div>
            <div class="border-transparent"><svg viewBox="0 0 16 16"><path d="M1 2h3v12H1z" fill="#7a5a3a"/><path d="M4.500 1h2.500v13H4.500z" fill="#b08a52"/><path d="M7.500 3h2.300v11H7.500z" fill="#3f6e9c"/><path d="M10 4l2.500-.7L15 13.500l-2.500.5z" fill="#8a9db0"/></svg></div>
            <div class="border-[#69a9e0] bg-[#4b5a62]"><svg viewBox="0 0 16 16"><rect x=".5" y=".5" width="15" height="15" rx="3" fill="#b30b00"/><path d="M3.500 12C6 11 8 7.500 7.700 4c0-1 1-1 .8 0C7.800 7 10 9.500 12.500 9.500 10 9 6 10 3.500 12z" fill="none" stroke="#fff" stroke-width="1.200"/></svg></div>
            <div class="border-[#69a9e0]"><svg viewBox="0 0 16 16"><circle cx="8" cy="8" r="3.900" fill="none" stroke="#fff" stroke-width="1.800"/><circle cx="8" cy="8" r="5.600" fill="none" stroke="#fff" stroke-width="1.900" stroke-dasharray="2.200 2.200"/></svg></div>
        </div>
        <!-- System tray -->
        <div class="flex items-center ml-auto text-[8.500px] [&>svg]:shrink-0">
            <svg class="w-[8px] h-[5px]" viewBox="0 0 8 5"><path d="M.7 4.300L4 1l3.300 3.300" fill="none" stroke="#fff" stroke-width="1.200"/></svg>
            <svg class="w-[10px] h-[12px] ml-[7px]" viewBox="0 0 10 12"><path d="M1 3.500h6v5H1zM7 5.300L9.300 4v4L7 6.700M2.500 1.200c1-.6 3-.6 4 0M2.500 10.800c1 .6 3 .6 4 0" fill="none" stroke="#fff" stroke-width="1.100"/></svg>
            <svg class="w-[11px] h-[9px] ml-[6px]" viewBox="0 0 11 9"><circle cx="4" cy="3.500" r="2.700" fill="#e9a13b"/><path d="M3 8.500C0 8.500.5 5 3 5.200 3.500 2 8 2 8.500 5c3 .2 2.500 3.500 0 3.500z" fill="#fff"/></svg>
            <svg class="w-[11px] h-[8px] ml-[5px]" viewBox="0 0 11 8"><path d="M2.500 7.500C-.5 7.300 0 3.800 2.500 4 3 .5 7.500 0 8 3.500c3.500 0 3.500 4 .5 4z" fill="#e8eefc"/></svg>
            <svg class="w-[12px] h-[10px] ml-[5px]" viewBox="0 0 12 10"><path d="M.7 3.500h1.800L5 1.300v7.400L2.500 6.500H.7zM6.700 3.300c.8 1 .8 2.400 0 3.400M8.500 2c1.500 1.700 1.500 4.300 0 6M10.300.8c2 2.400 2 6 0 8.400" fill="none" stroke="#fff" stroke-width=".9"/></svg>
            <svg class="w-[10px] h-[10px] ml-[6px]" viewBox="0 0 10 10"><path d="M1 9C1 4 4 1 9 1M3.200 9C3.200 5.500 5.500 3.200 9 3.200M5.400 9c0-2.200 1.400-3.600 3.600-3.600" fill="none" stroke="#fff" stroke-width=".9"/><circle cx="8" cy="8.300" r="1.100" fill="#fff"/></svg>
            <svg class="w-[12px] h-[12px] ml-[7px]" viewBox="0 0 12 12"><path d="M4 8.500L9.500 1.500l1.500 1.300-5.500 7zM4 8.500C1 6 0 9 1.500 10.500 3 11.800 4.500 10.500 4 8.500zM6 4l4 4.500" fill="none" stroke="#fff"/></svg>
            <span class="ml-[9px] w-[16px] tracking-[-0.300px]">ENG</span>
            <span class="flex flex-col items-center gap-[4px] w-[36px] ml-[5px] text-[8.300px] tracking-[-0.450px]"><span>2:47 PM</span><span>4/26/2021</span></span>
            <svg class="w-[18px] h-[17px] ml-[12px] mr-[10px]" viewBox="0 0 18 17"><path d="M1 1h11v9H7l-3 3v-3H1z" fill="#fff"/><path d="M3 3.700h7M3 6h7" stroke="#1b2b45"/><circle cx="11.500" cy="11" r="5" fill="#1b2b45" stroke="#b8c0cc" stroke-width=".7"/><path d="M10 9.500c.3-1.700 3-1.400 2.800.2-.2 1.200-2.600 2-2.900 3.400H13" fill="none" stroke="#fff"/></svg>
        </div>
    </div>
</div>
</body>
</html>
